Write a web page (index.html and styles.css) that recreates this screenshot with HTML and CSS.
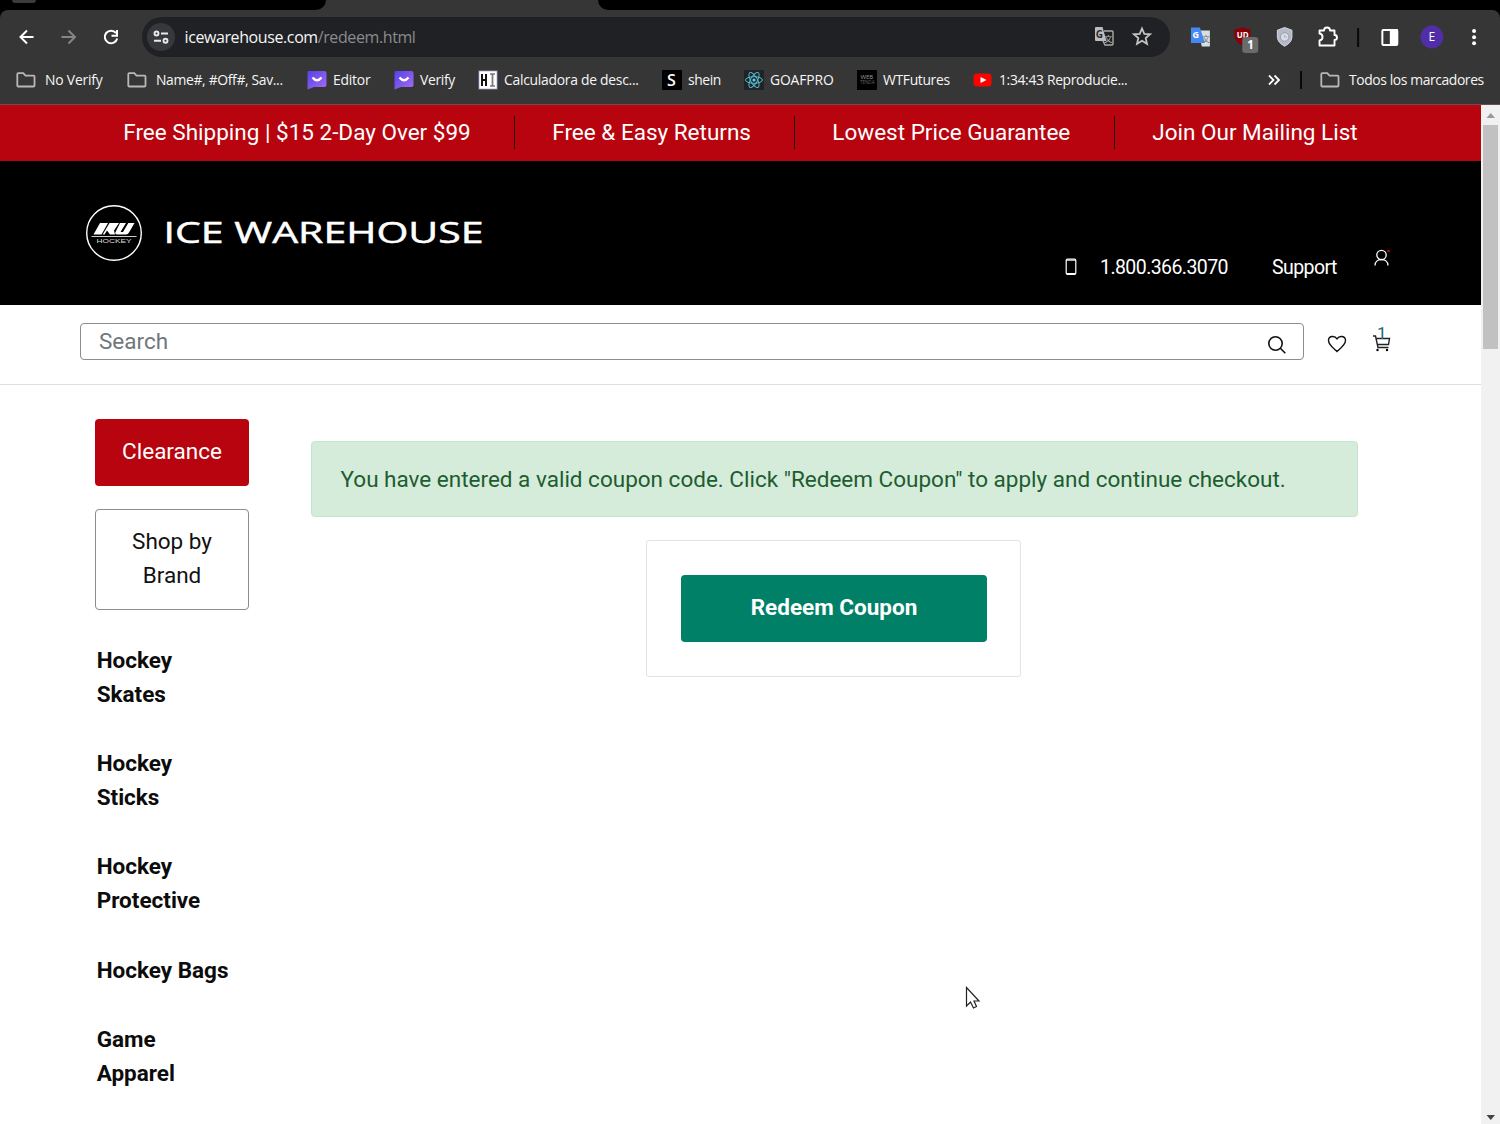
FILE: index.html
```html
<!DOCTYPE html>
<html lang="en">
<head>
<meta charset="utf-8">
<title>Ice Warehouse</title>
<link rel="stylesheet" href="styles.css">
</head>
<body>
<svg class="defs" width="0" height="0">
  <symbol id="folder" viewBox="0 0 20 16"><path d="M1.3 2.2q0-1 1-1h5l2.2 2.4h8q1 0 1 1v8.9q0 1-1 1H2.3q-1 0-1-1z" fill="none" stroke="#b8b8b8" stroke-width="1.8"/></symbol>
  <symbol id="chat" viewBox="0 0 20 20"><linearGradient id="violet" x2="1" y2="1"><stop stop-color="#5442e8"/><stop offset="1" stop-color="#a66cf2"/></linearGradient><path d="M1.500 1h16q2 0 2 2v12q0 2-2 2H7l-6.500 2.500V2q0-1 1-1z" fill="url(#violet)"/><path d="M5.500 7.500q4.500 5.500 9 0" fill="none" stroke="#fff" stroke-width="2.400"/></symbol>
</svg>
<div class="browser">
  <div class="tabs"><div class="tabs-left"><i></i></div><div class="tabs-right"></div></div>
  <div class="toolbar">
    <svg class="nav" viewBox="0 0 142 46"><g fill="none" stroke="#fff" stroke-width="2"><path d="M33.500 27H20.500M27 20.500l-6.500 6.500L27 33.500"/><path d="M61.500 27H75M68.500 20.500l6.500 6.500-6.500 6.500" stroke="#858585"/><path d="M116 23a6.300 6.300 0 1 0 1.200 5.500M117 20v5.700h-5.500"/></g></svg>
    <div class="address">
      <svg class="site" viewBox="0 0 28 28"><circle cx="14" cy="14" r="14" fill="#37383b"/><g fill="none" stroke="#e8e8e8" stroke-width="1.900"><circle cx="9.500" cy="10.500" r="2"/><path d="M14 10.500h7M7 17.700h7"/><circle cx="18.500" cy="17.700" r="2"/></g></svg>
      <span class="url">icewarehouse.com<b>/redeem.html</b></span>
      <svg class="addr-icons" viewBox="0 0 64 26"><path d="M2 3h6.500l4 14H2q-1 0-1-1V4q0-1 1-1z" fill="#bdbdbd"/><path d="M10 7h8q1 0 1 1v12q0 1-1 1h-7l-2-4" fill="none" stroke="#aaa" stroke-width="1.400"/><text x="1.800" y="13.500" font-size="10" font-weight="700" fill="#292a2d">G</text><text x="10" y="17.500" font-size="8.500" class="cjk" fill="#bdbdbd">文</text><path d="M48 4.500l2.300 5.300 5.800.5-4.400 3.800 1.300 5.700-5-3-5 3 1.300-5.700-4.400-3.800 5.800-.5z" fill="none" stroke="#c4c4c4" stroke-width="1.800"/></svg>
    </div>
    <svg class="extensions" viewBox="0 0 331 46">
      <path d="M28 20.500h12v16h-8z" fill="#d9dfdf"/><path d="M21.500 17.500h8.500l5 15.500H21.500q-.5 0-.5-.5V18q0-.5.500-.5z" fill="#4688f1"/><text x="22.500" y="28" font-size="9" font-weight="700" fill="#fff">G</text><text x="32" y="32" font-size="8" class="cjk" fill="#65757c">文</text>
      <path d="M72.500 17.300q5 2 8 2v7q-1 6-8 9-7-3-8-9v-7q4 0 8-2z" fill="#870007"/><text x="67" y="28.500" font-size="8" font-weight="700" fill="#fff">UD</text><rect x="72.500" y="27" width="16" height="16" rx="3" fill="#6a6b6b"/><text x="77.500" y="39.500" font-size="11.500" font-weight="700" fill="#fff">1</text>
      <path d="M115 17.500l7.300 2.700v7q-.5 5.800-7.300 9-6.800-3.200-7.300-9v-7z" fill="#b4bac8" stroke="#d6d9e1"/><circle cx="115" cy="27" r="4.300" fill="#d9dce3" stroke="#959daf"/><path d="M115 25v2h2" stroke="#a4abb8" fill="none"/>
      <path d="M150 20.500h4.500q0-3 3-3t3 3h4.500v4.500q2.500 0 2.500 2.500t-2.500 2.500v5.500h-15v-5q3-.5 3-3.500t-3-3.500z" fill="none" stroke="#fff" stroke-width="1.900" stroke-linejoin="round"/>
      <path d="M188.700 18v19" stroke="#080808" stroke-width="2"/>
      <rect x="213" y="20" width="15" height="15" rx="1" fill="none" stroke="#fff" stroke-width="2"/><path d="M220.500 19h8v16h-8z" fill="#fff"/>
      <circle cx="262.700" cy="27" r="11.500" fill="#512da8"/><text x="259.300" y="31.500" font-size="12" fill="#fff">E</text>
      <g fill="#fff"><circle cx="305" cy="21" r="2"/><circle cx="305" cy="27.200" r="2"/><circle cx="305" cy="33.400" r="2"/></g>
    </svg>
  </div>
  <div class="bookmarks">
    <div><svg><use href="#folder"/></svg><span class="t1">No Verify</span></div>
    <div><svg><use href="#folder"/></svg><span class="t2">Name#, #Off#, Sav...</span></div>
    <div class="near"><svg><use href="#chat"/></svg><span class="t3">Editor</span></div>
    <div class="near"><svg><use href="#chat"/></svg><span class="t4">Verify</span></div>
    <div class="near"><svg viewBox="0 0 20 20"><rect x=".7" y=".7" width="18.600" height="18.600" fill="#fff" stroke="#575a7e"/><path d="M4 4v12M8 4v12M4 10h4" stroke="#111" stroke-width="2"/><path d="M12 4h5M12 16h5M14.500 4v12" stroke="#777" stroke-width="1.700"/></svg><span class="t5">Calculadora de desc...</span></div>
    <div class="near"><svg viewBox="0 0 20 20"><path d="M0 0h20v20H0z"/><text x="5" y="15.500" font-size="16" font-weight="600" fill="#fff">S</text></svg><span class="t6">shein</span></div>
    <div class="near"><svg viewBox="0 0 20 20"><path fill="#202326" d="M0 0h20v20H0z"/><g fill="none" stroke="#55b9d2" stroke-width="1"><ellipse cx="10" cy="10" rx="8.500" ry="3.300"/><ellipse cx="10" cy="10" rx="8.500" ry="3.300" transform="rotate(60 10 10)"/><ellipse cx="10" cy="10" rx="8.500" ry="3.300" transform="rotate(120 10 10)"/></g><circle cx="10" cy="10" r="1.600" fill="#62cbe4"/></svg><span class="t7">GOAFPRO</span></div>
    <div class="near"><svg viewBox="0 0 20 20"><path d="M0 0h20v20H0z"/><text x="3.500" y="9" font-size="6" fill="#999">WEB</text><text x="3" y="13.500" font-size="4.500" fill="#666">TENDA</text></svg><span class="t8">WTFutures</span></div>
    <div class="near"><svg viewBox="0 0 20 20"><rect x=".5" y="3.500" width="18" height="13" rx="3.500" fill="#f00"/><path d="M7.500 7l6 3-6 3z" fill="#fff"/></svg><span class="t9">1:34:43 Reproducie...</span></div>
    <svg class="more" viewBox="0 0 46 24"><path d="M3 7.500l4.500 4.500L3 16.500M8.500 7.500l4.500 4.500-4.500 4.500" fill="none" stroke="#fff" stroke-width="1.800"/><path d="M35 3v18" stroke="#080808" stroke-width="2"/></svg>
    <div><svg><use href="#folder"/></svg><span class="t10">Todos los marcadores</span></div>
  </div>
</div>
<div class="viewport">
  <div class="page">
    <nav class="promo"><a>Free Shipping | $15 2-Day Over $99</a><a>Free &amp; Easy Returns</a><a>Lowest Price Guarantee</a><a>Join Our Mailing List</a></nav>
    <header class="header">
      <svg class="logo" viewBox="0 0 400 58"><circle cx="29" cy="29" r="27.300" fill="none" stroke="#fff" stroke-width="1.400"/><path d="M15 19H23L16.500 30.500H8.500zM24.500 19H34L29 26.500L30 30.500H25L22 26.500L19.500 30.500H17.700zM35 19H41L35.500 28H38L43.300 19H49.500L44 28.500Q43 30.500 41 30.500H32Q29.500 30 30.500 28z" fill="#fff"/><path d="M6.500 32.500h45" stroke="#ccc" stroke-width="1"/><text x="11.500" y="38.800" font-size="6" textLength="35" lengthAdjust="spacingAndGlyphs" fill="#ddd">HOCKEY</text><text class="wordmark" transform="translate(78.500 38.800) scale(1.300 1)" textLength="246.200" lengthAdjust="spacingAndGlyphs">ICE WAREHOUSE</text></svg>
      <div class="contact">
        <svg class="phone" viewBox="0 0 12 18"><rect x="1.200" y="1.200" width="9.600" height="15.200" rx="1.300" fill="none" stroke="#fff" stroke-width="1.200"/><path d="M1 2.200h10M1 15.500h10" stroke="#fff"/></svg>
        <span class="number">1.800.366.3070</span><span class="support">Support</span>
        <svg class="account" viewBox="0 0 18 18"><g fill="none" stroke="#fff" stroke-width="1.300"><circle cx="8.500" cy="6" r="4.700"/><path d="M2 16.500c0-8 13-8 13 0"/></g><circle cx="15.500" cy="2" r="1.300" fill="#b9040e"/></svg>
      </div>
    </header>
    <div class="search-row">
      <div class="search"><span>Search</span><svg viewBox="0 0 20 20"><g fill="none" stroke="#111" stroke-width="1.600"><circle cx="8.500" cy="8.500" r="6.700"/><path d="M13.300 13.300l5 5"/></g></svg></div>
      <svg class="heart" viewBox="0 0 20 18"><path d="M10 16.500C7.500 14 1.500 10 1.500 5.500c0-4.500 6-5.500 8.500-1.700 2.500-3.800 8.500-2.800 8.500 1.700 0 4.500-6 8.500-8.500 11z" fill="none" stroke="#111" stroke-width="1.400"/></svg>
      <div class="cart"><svg viewBox="0 0 18 28"><path d="M0 12h2.500l2.500 11.500h10.500M3 14.500H16.500l-1 6H4.500" fill="none" stroke="#222" stroke-width="1.400"/><circle cx="4.500" cy="26" r="1.200"/><circle cx="14" cy="26" r="1.200"/></svg><span>1</span></div>
    </div>
    <main class="content">
      <aside>
        <a class="clearance">Clearance</a>
        <a class="brand">Shop by<br>Brand</a>
        <ul><li>Hockey<br>Skates</li><li>Hockey<br>Sticks</li><li>Hockey<br>Protective</li><li>Hockey Bags</li><li>Game<br>Apparel</li></ul>
      </aside>
      <section>
        <div class="alert"><span>You have entered a valid coupon code. Click "Redeem Coupon" to apply and continue checkout.</span></div>
        <div class="card"><button>Redeem Coupon</button></div>
      </section>
    </main>
  </div>
  <div class="scrollbar"><svg viewBox="0 0 19 20"><path d="M5.500 13h8.500l-4.250-5z" fill="#999"/></svg><div></div><svg class="down" viewBox="0 0 19 20"><path d="M5.500 11h8.500l-4.250 5z" fill="#444"/></svg></div>
</div>
<svg class="pointer" viewBox="0 0 16 24"><path d="M1.500 1.500v18.500l4-4 3 6 3-1.500-2.500-5.500h5z" fill="#fff" stroke="#222" stroke-width="1.200"/></svg>
</body>
</html>
```
FILE: styles.css
```css
* { box-sizing: border-box; }
body { margin: 0; height: 1124px; overflow: hidden; display: flex; flex-direction: column; background: #fff; font-family: Roboto, sans-serif; font-size: 22.5px; line-height: 34px; color: #111; }
svg { display: block; flex: none; }
.defs { position: absolute; }
.cjk { font-family: "Noto Sans CJK SC", sans-serif; }
.browser { height: 105px; flex: none; background: #000; color: #f5f5f5; font: 13.9px/20px "Open Sans", sans-serif; }
.tabs { height: 10px; display: flex; justify-content: space-between; background: #363636; }
.tabs-left { width: 326px; background: #000; border-bottom-right-radius: 10px; }
.tabs-left i { display: block; width: 24px; height: 3px; margin-left: 12px; background: #3b3b3b; border-radius: 0 0 12px 12px; }
.tabs-right { width: 902px; background: #000; border-bottom-left-radius: 10px; }
.toolbar { height: 46px; display: flex; background: #363636; border-radius: 8px 8px 0 0; }
.nav { width: 142px; height: 46px; }
.address { width: 1028px; height: 40px; margin-top: 7px; border-radius: 20px; background: #202124; display: flex; align-items: center; padding-left: 5px; }
.site { width: 28px; height: 28px; }
.url { margin-left: 9.500px; font-size: 16px; white-space: nowrap; letter-spacing: -.4px; }
.url b { font-weight: 400; color: #8b8b8c; }
.addr-icons { width: 64px; height: 26px; margin-left: auto; margin-right: 12px; }
.extensions { width: 330px; height: 46px; }
.bookmarks { height: 49px; padding-left: 16px; background: #363636; border-bottom: 1px solid #6d4c4f; display: grid; grid-template-columns: 111px 180px 87px 84px 184px 82px 113px 116px 293px 54px 180px; align-items: center; white-space: nowrap; }
.bookmarks > div { display: flex; align-items: center; gap: 9px; letter-spacing: -.34px; }
.bookmarks > .near { gap: 6px; }
.bookmarks > div > svg { width: 20px; height: 20px; letter-spacing: 0; }
.bookmarks .t1, .bookmarks .t3 { letter-spacing: -.2px; }
.bookmarks .t5 { letter-spacing: -.27px; }
.bookmarks .t6, .bookmarks .t10 { letter-spacing: -.4px; }
.bookmarks .t7 { letter-spacing: -.15px; }
.more { width: 46px; height: 24px; }
.viewport { flex: 1; display: flex; min-height: 0; }
.page { width: 1481px; overflow: hidden; }
.promo { height: 56px; background: #b7040e; color: #fff; padding: 11px 0 0 86px; display: grid; grid-template-columns: 429px 280px 320px 366px; }
.promo a { height: 33px; padding-left: 37.300px; line-height: 32px; border-right: 1px solid #260003; white-space: nowrap; }
.promo a:last-child { border: 0; }
.header { height: 144px; background: #000; color: #fff; display: flex; align-items: flex-start; }
.logo { width: 400px; height: 58px; margin: 43px 0 0 85px; font-family: "Liberation Sans", sans-serif; }
.wordmark { font: 28.5px "Open Sans", sans-serif; fill: #fff; stroke: #fff; stroke-width: .5px; }
.contact { margin: 90px 0 0 580px; display: flex; font-size: 19.5px; white-space: nowrap; letter-spacing: -.57px; }
.phone { width: 12px; height: 18px; margin-top: 7px; }
.number { width: 172px; margin-left: 23px; }
.support { width: 101px; }
.account { width: 18px; height: 18px; margin-top: -2px; }
.search-row { height: 80px; border-bottom: 1px solid #dedede; display: flex; padding: 18px 0 0 80px; }
.search { width: 1224px; height: 37px; border: 1px solid #8d8d8d; border-radius: 4px; padding: 0 16px 0 18px; display: flex; justify-content: space-between; color: #6f777d; }
.search svg { width: 20px; height: 20px; margin-top: 10.500px; }
.heart { width: 20px; height: 18px; margin: 12px 0 0 23px; }
.cart { width: 18px; height: 28px; position: relative; margin: 1px 0 0 26px; }
.cart svg { width: 18px; height: 28px; }
.cart span { position: absolute; top: 0; left: 4px; font-size: 17px; line-height: 18px; color: #24647d; }
.content { display: flex; padding: 34px 0 0 95px; }
aside { width: 154px; flex: none; text-align: center; }
.clearance { display: block; height: 67px; border-radius: 4px; background: #b7040e; color: #fff; padding-top: 15px; }
.brand { display: block; height: 101px; margin-top: 23px; border: 1px solid #8c8c8c; border-radius: 4px; padding-top: 14px; }
aside ul { list-style: none; padding: 0 0 0 1.700px; margin: 32.600px 0 0; text-align: left; font-weight: 700; white-space: nowrap; color: #0c0c0c; }
aside li { margin-bottom: 35.450px; }
section { width: 1047px; margin: 22px 0 0 62px; }
.alert { height: 76px; background: #d5ecdb; border: 1px solid #c3e6cb; border-radius: 4px; color: #205c30; padding: 20px 0 0 28.500px; white-space: nowrap; }
.card { width: 375px; height: 137px; border: 1px solid #e3e3e3; border-radius: 3px; margin: 22.500px 0 0 335px; padding: 34px; }
.card button { display: block; width: 306px; height: 67px; border: 0; border-radius: 4px; padding: 0 0 2px; background: #008066; color: #fff; font: 700 22.5px Roboto, sans-serif; }
.scrollbar { width: 19px; background: #f1f1f1; display: flex; flex-direction: column; }
.scrollbar svg { width: 19px; height: 20px; }
.scrollbar div { width: 15px; height: 224px; margin-left: 2px; background: #c1c1c1; }
.scrollbar .down { margin-top: auto; }
.pointer { position: absolute; left: 965px; top: 985.500px; width: 16px; height: 24px; }
```
